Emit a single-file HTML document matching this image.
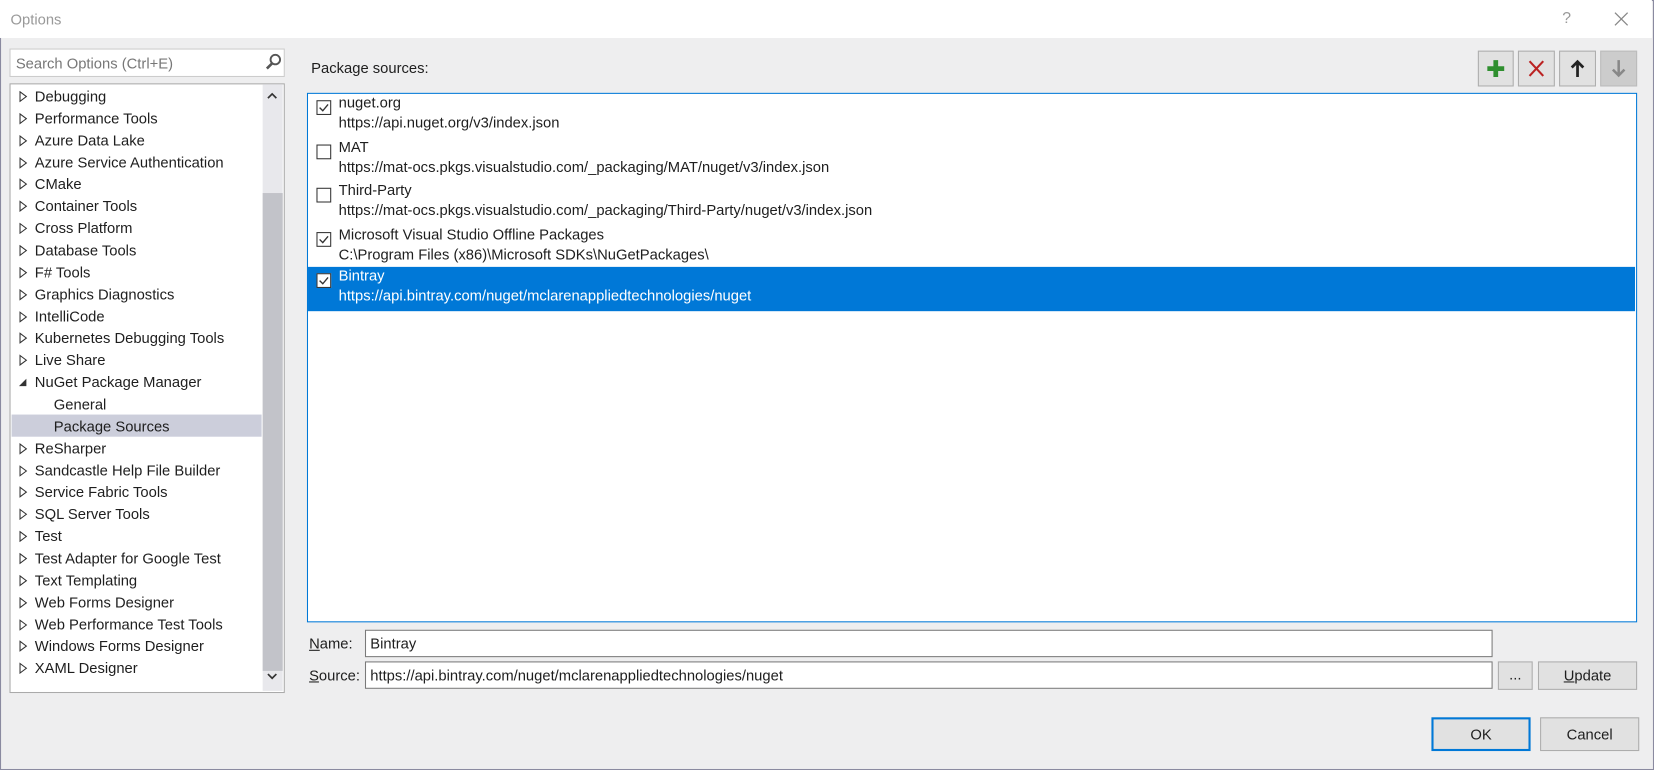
<!DOCTYPE html>
<html><head><meta charset="utf-8"><style>
html,body{margin:0;padding:0;overflow:hidden;width:1654px;height:770px;background:#fff}
#s{position:absolute;left:0;top:0;width:1568px;height:730px;transform:scale(1.05485);transform-origin:0 0;font-family:"Liberation Sans",sans-serif;font-size:14px;color:#1e1e1e}
.a{position:absolute}
.win{left:0;top:0;width:1566px;height:728px;border:1px solid #8a8aa0;background:#eeeeef}
.title{left:0;top:0;width:1566px;height:36px;background:#fff}
.box{background:#fff;border:1px solid #ccc}
.tr{position:absolute;left:10px;height:21px;line-height:21px;width:236px}
.tr svg.t{position:absolute;left:8px;top:5px}
.tr span{position:absolute;left:23px}
.it{position:absolute;left:1px;width:1258px;height:42px}
.cb{position:absolute;left:8px;top:6px;width:12px;height:12px;border:1px solid #333;background:#fff}
.it .t1{position:absolute;left:29px;top:0;line-height:17px}
.it .t2{position:absolute;left:29px;top:19px;line-height:17px}
.btn{background:#e1e1e1;border:1px solid #adadad;text-align:center}
.inp{background:#fff;border:1px solid #7a7a7a;height:23px;line-height:23px;padding-left:4px;box-sizing:border-box}
</style></head><body><div id="s">
<div class="a win"></div>
<div class="a title"></div>
<div class="a" style="left:10px;top:10px;color:#999;font-size:14px">Options</div>
<div class="a" style="left:1481px;top:9px;color:#999;font-size:15px">?</div>
<svg class="a" style="left:1530px;top:11px" width="14" height="14"><path d="M1 1L13 13M13 1L1 13" stroke="#888" stroke-width="1.2"/></svg>

<div class="a box" style="left:9px;top:46px;width:259px;height:25px"></div>
<div class="a" style="left:15px;top:52px;color:#777;font-size:14px">Search Options (Ctrl+E)</div>
<svg class="a" style="left:250px;top:50px" width="18" height="18"><circle cx="11" cy="6.5" r="4.5" fill="none" stroke="#555" stroke-width="1.8"/><path d="M8 10L3 15" stroke="#555" stroke-width="2.5"/></svg>

<div class="a box" style="left:9px;top:79px;width:259px;height:576px;border-color:#aaa"></div>
<div class="a" style="left:249px;top:80px;width:19px;height:575px;background:#e8e8ec"></div>
<div class="a" style="left:249px;top:183px;width:19px;height:453px;background:#c2c3c9"></div>
<svg class="a" style="left:252px;top:86px" width="12" height="10"><path d="M2 7L6 3L10 7" fill="none" stroke="#333" stroke-width="1.6"/></svg>
<svg class="a" style="left:252px;top:636px" width="12" height="10"><path d="M2 3L6 7L10 3" fill="none" stroke="#333" stroke-width="1.6"/></svg>
<div class="a" style="left:11px;top:393px;width:237px;height:21px;background:#cccedb"></div>

<div class="tr" style="top:81px"><svg class="t" width="8" height="11"><path d="M1 1L7 5.5L1 10Z" fill="none" stroke="#333"/></svg><span>Debugging</span></div>
<div class="tr" style="top:102px"><svg class="t" width="8" height="11"><path d="M1 1L7 5.5L1 10Z" fill="none" stroke="#333"/></svg><span>Performance Tools</span></div>
<div class="tr" style="top:123px"><svg class="t" width="8" height="11"><path d="M1 1L7 5.5L1 10Z" fill="none" stroke="#333"/></svg><span>Azure Data Lake</span></div>
<div class="tr" style="top:144px"><svg class="t" width="8" height="11"><path d="M1 1L7 5.5L1 10Z" fill="none" stroke="#333"/></svg><span>Azure Service Authentication</span></div>
<div class="tr" style="top:164px"><svg class="t" width="8" height="11"><path d="M1 1L7 5.5L1 10Z" fill="none" stroke="#333"/></svg><span>CMake</span></div>
<div class="tr" style="top:185px"><svg class="t" width="8" height="11"><path d="M1 1L7 5.5L1 10Z" fill="none" stroke="#333"/></svg><span>Container Tools</span></div>
<div class="tr" style="top:206px"><svg class="t" width="8" height="11"><path d="M1 1L7 5.5L1 10Z" fill="none" stroke="#333"/></svg><span>Cross Platform</span></div>
<div class="tr" style="top:227px"><svg class="t" width="8" height="11"><path d="M1 1L7 5.5L1 10Z" fill="none" stroke="#333"/></svg><span>Database Tools</span></div>
<div class="tr" style="top:248px"><svg class="t" width="8" height="11"><path d="M1 1L7 5.5L1 10Z" fill="none" stroke="#333"/></svg><span>F# Tools</span></div>
<div class="tr" style="top:269px"><svg class="t" width="8" height="11"><path d="M1 1L7 5.5L1 10Z" fill="none" stroke="#333"/></svg><span>Graphics Diagnostics</span></div>
<div class="tr" style="top:290px"><svg class="t" width="8" height="11"><path d="M1 1L7 5.5L1 10Z" fill="none" stroke="#333"/></svg><span>IntelliCode</span></div>
<div class="tr" style="top:310px"><svg class="t" width="8" height="11"><path d="M1 1L7 5.5L1 10Z" fill="none" stroke="#333"/></svg><span>Kubernetes Debugging Tools</span></div>
<div class="tr" style="top:331px"><svg class="t" width="8" height="11"><path d="M1 1L7 5.5L1 10Z" fill="none" stroke="#333"/></svg><span>Live Share</span></div>
<div class="tr" style="top:352px"><svg style="position:absolute;left:7px;top:6px" width="9" height="9"><path d="M8 1L8 8L1 8Z" fill="#333"/></svg><span>NuGet Package Manager</span></div>
<div class="tr" style="top:373px"><span style="left:41px">General</span></div>
<div class="tr" style="top:394px"><span style="left:41px">Package Sources</span></div>
<div class="tr" style="top:415px"><svg class="t" width="8" height="11"><path d="M1 1L7 5.5L1 10Z" fill="none" stroke="#333"/></svg><span>ReSharper</span></div>
<div class="tr" style="top:436px"><svg class="t" width="8" height="11"><path d="M1 1L7 5.5L1 10Z" fill="none" stroke="#333"/></svg><span>Sandcastle Help File Builder</span></div>
<div class="tr" style="top:456px"><svg class="t" width="8" height="11"><path d="M1 1L7 5.5L1 10Z" fill="none" stroke="#333"/></svg><span>Service Fabric Tools</span></div>
<div class="tr" style="top:477px"><svg class="t" width="8" height="11"><path d="M1 1L7 5.5L1 10Z" fill="none" stroke="#333"/></svg><span>SQL Server Tools</span></div>
<div class="tr" style="top:498px"><svg class="t" width="8" height="11"><path d="M1 1L7 5.5L1 10Z" fill="none" stroke="#333"/></svg><span>Test</span></div>
<div class="tr" style="top:519px"><svg class="t" width="8" height="11"><path d="M1 1L7 5.5L1 10Z" fill="none" stroke="#333"/></svg><span>Test Adapter for Google Test</span></div>
<div class="tr" style="top:540px"><svg class="t" width="8" height="11"><path d="M1 1L7 5.5L1 10Z" fill="none" stroke="#333"/></svg><span>Text Templating</span></div>
<div class="tr" style="top:561px"><svg class="t" width="8" height="11"><path d="M1 1L7 5.5L1 10Z" fill="none" stroke="#333"/></svg><span>Web Forms Designer</span></div>
<div class="tr" style="top:582px"><svg class="t" width="8" height="11"><path d="M1 1L7 5.5L1 10Z" fill="none" stroke="#333"/></svg><span>Web Performance Test Tools</span></div>
<div class="tr" style="top:602px"><svg class="t" width="8" height="11"><path d="M1 1L7 5.5L1 10Z" fill="none" stroke="#333"/></svg><span>Windows Forms Designer</span></div>
<div class="tr" style="top:623px"><svg class="t" width="8" height="11"><path d="M1 1L7 5.5L1 10Z" fill="none" stroke="#333"/></svg><span>XAML Designer</span></div>

<div class="a" style="left:295px;top:56px">Package sources:</div>
<div class="a btn" style="left:1401px;top:48px;width:32px;height:32px"><svg width="32" height="32"><path d="M16 8V24M8 16H24" stroke="#2f8f2f" stroke-width="4.5"/></svg></div>
<div class="a btn" style="left:1439px;top:48px;width:33px;height:32px"><svg width="33" height="32"><path d="M10 9L23 23M23 9L10 23" stroke="#b22" stroke-width="2"/></svg></div>
<div class="a btn" style="left:1478px;top:48px;width:33px;height:32px"><svg width="33" height="32"><path d="M16.5 24V11M11 15L16.5 9.5L22 15" fill="none" stroke="#222" stroke-width="2.6"/></svg></div>
<div class="a btn" style="left:1517px;top:48px;width:33px;height:32px;background:#ccc;border-color:#bbb"><svg width="33" height="32"><path d="M16.5 8V21M11 17L16.5 22.5L22 17" fill="none" stroke="#888" stroke-width="2.4"/></svg></div>

<div class="a" style="left:291px;top:88px;width:1259px;height:500px;background:#fff;border:1px solid #0078d7"></div>
<div class="a" style="left:291px;top:89px">
 <div class="it" style="top:0"><div class="cb"><svg width="12" height="12" style="position:absolute"><path d="M2 6L5 9L10 3" fill="none" stroke="#333" stroke-width="1.3"/></svg></div><div class="t1">nuget.org</div><div class="t2">https://api.nuget.org/v3/index.json</div></div>
 <div class="it" style="top:42px"><div class="cb"></div><div class="t1">MAT</div><div class="t2">https://mat-ocs.pkgs.visualstudio.com/_packaging/MAT/nuget/v3/index.json</div></div>
 <div class="it" style="top:83px"><div class="cb"></div><div class="t1">Third-Party</div><div class="t2">https://mat-ocs.pkgs.visualstudio.com/_packaging/Third-Party/nuget/v3/index.json</div></div>
 <div class="it" style="top:125px"><div class="cb"><svg width="12" height="12" style="position:absolute"><path d="M2 6L5 9L10 3" fill="none" stroke="#333" stroke-width="1.3"/></svg></div><div class="t1">Microsoft Visual Studio Offline Packages</div><div class="t2">C:\Program Files (x86)\Microsoft SDKs\NuGetPackages\</div></div>
 <div class="it" style="top:164px;height:42px;background:#0078d7;color:#fff"><div class="cb"><svg width="12" height="12" style="position:absolute"><path d="M2 6L5 9L10 3" fill="none" stroke="#333" stroke-width="1.3"/></svg></div><div class="t1">Bintray</div><div class="t2">https://api.bintray.com/nuget/mclarenappliedtechnologies/nuget</div></div>
</div>

<div class="a" style="left:293px;top:602px"><u>N</u>ame:</div>
<div class="a inp" style="left:346px;top:597px;width:1069px;height:26px;line-height:24px">Bintray</div>
<div class="a" style="left:293px;top:632px"><u>S</u>ource:</div>
<div class="a inp" style="left:346px;top:627px;width:1069px;height:26px;line-height:24px">https://api.bintray.com/nuget/mclarenappliedtechnologies/nuget</div>
<div class="a btn" style="left:1420px;top:627px;width:31px;height:25px;line-height:23px">...</div>
<div class="a btn" style="left:1458px;top:627px;width:92px;height:25px;line-height:25px"><u>U</u>pdate</div>

<div class="a btn" style="left:1357px;top:680px;width:90px;height:28px;line-height:28px;border:2px solid #0078d7">OK</div>
<div class="a btn" style="left:1460px;top:680px;width:92px;height:30px;line-height:30px">Cancel</div>
</div></body></html>
